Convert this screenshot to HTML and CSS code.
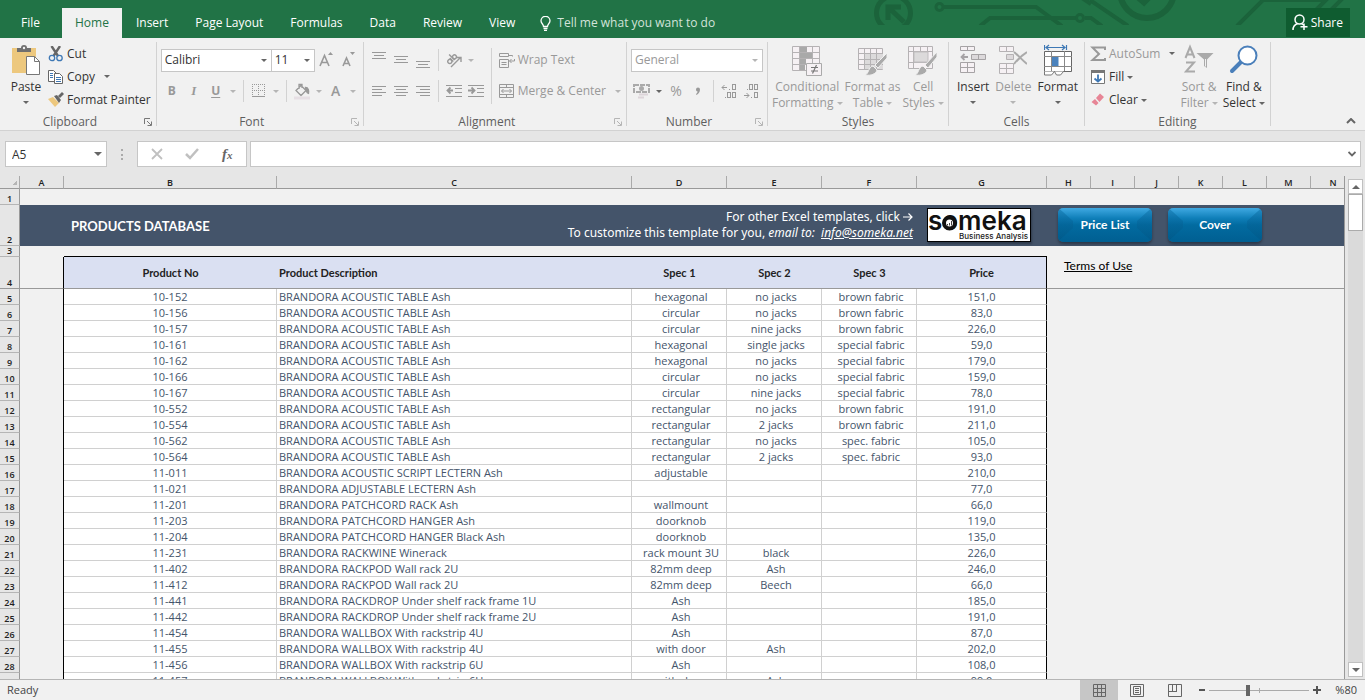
FILE: index.html
```html
<!DOCTYPE html>
<html lang="en">
<head>
<meta charset="utf-8">
<title>Products Database</title>
<link rel="stylesheet" href="styles.css">
</head>
<body>
<header class="titlebar">
  <svg class="circuit" width="495" height="25" viewBox="0 0 495 25" fill="none" stroke="#1b633b" stroke-width="4">
    <circle cx="23.500" cy="13" r="17" stroke-width="5"/>
    <path d="M18 20V7h13M18 7l16 15" stroke-width="5"/>
    <circle cx="69.500" cy="7" r="3.500" stroke-width="3"/>
    <path d="M74 7h92l26 19M110 26l10-8h86M215 18h6l11 8M220 0l38 26"/>
    <circle cx="210" cy="18" r="3.500" stroke-width="3"/>
    <path d="M209-4l12 8"/>
    <circle cx="277" cy="-9" r="27" stroke-width="6"/>
    <path d="M267-3l7 6 14-14" stroke-width="5"/>
    <path d="M367 26l26-26h62M446 10l12-12M461 10l12-12"/>
  </svg>
  <nav class="tabs">
    <button class="tab tab-file">File</button>
    <button class="tab tab-active">Home</button>
    <button class="tab">Insert</button>
    <button class="tab">Page Layout</button>
    <button class="tab">Formulas</button>
    <button class="tab">Data</button>
    <button class="tab">Review</button>
    <button class="tab">View</button>
  </nav>
  <button class="tell">
    <svg width="11" height="15" viewBox="0 0 11 15" fill="none" stroke="#fff" stroke-width="1.300"><path d="M3.500 10.500C3.500 8 1 7.500 1 4.800A4.300 4.300 0 0 1 10 4.800C10 7.500 7.500 8 7.500 10.500zM3.500 12.500h4M4 14.300h3"/></svg>
    <span>Tell me what you want to do</span>
  </button>
  <button class="share">
    <svg width="16" height="17" viewBox="0 0 16 17" fill="none" stroke="#fff" stroke-width="1.500"><circle cx="7.500" cy="5.500" r="4.500"/><path d="M1 16c0-3.500 2-5.500 4.500-6.500M9.500 9.500l2 1.500M12 9.500v6.500M8.500 12.800h7"/></svg>
    <span>Share</span>
  </button>
</header>

<section class="ribbon">
  <div class="group">
    <div class="group-body clip-body">
      <button class="big paste">
        <svg width="30" height="32" viewBox="0 0 30 32"><path d="M1 4h24v25H1z" fill="#edc87e"/><path d="M6 8V4h4a3 3 0 0 1 6 0h4v4z" fill="#6f6f6f"/><circle cx="13" cy="4" r="1.200" fill="#f1f1f1"/><path d="M15.500 12.500h8l5 5v13h-13z" fill="#fff" stroke="#777"/><path d="M23.500 12.500v5h5" fill="none" stroke="#777"/></svg>
        <span>Paste</span><i class="caret"></i>
      </button>
      <div class="stack">
        <button class="row-btn"><svg width="16" height="16" viewBox="0 0 16 16" fill="none"><path d="M3.500 0l6.500 10M12 0L5.500 10" stroke="#666" stroke-width="2.400"/><circle cx="4" cy="12" r="2.700" stroke="#3e78b5" stroke-width="1.300"/><circle cx="11.500" cy="12" r="2.700" stroke="#3e78b5" stroke-width="1.300"/></svg><span>Cut</span></button>
        <button class="row-btn"><svg width="16" height="16" viewBox="0 0 16 16" fill="#fff" stroke="#666"><path d="M.5 1.500h5l3 3v8h-8z"/><path d="M6.500 4.500h5l3 3v7h-8z"/><path d="M2 4.500h3M2 6.500h3M2 8.500h3M8 8.500h5M8 10.500h5M8 12.500h5" stroke="#3e78b5"/></svg><span>Copy</span><i class="caret gap"></i></button>
        <button class="row-btn"><svg width="16" height="16" viewBox="0 0 16 16"><path d="M0 7l5-2 6 6-4 4z" fill="#edc87e"/><path d="M6 4l3-1 4 5-2 3zM10 4l4-4 2 2-4 4z" fill="#666"/></svg><span>Format Painter</span></button>
      </div>
    </div>
    <div class="group-foot"><span>Clipboard</span><button class="launch" aria-label="Clipboard options"><svg width="8" height="8" viewBox="0 0 8 8" fill="none" stroke="currentColor"><path d="M.5 6V.5H6M3 3l4 4M7.500 3.500v4h-4"/></svg></button></div>
  </div>

  <div class="group">
    <div class="group-body rows">
      <div class="line">
        <span class="combo combo-font"><select aria-label="Font"><option>Calibri</option></select><i class="caret"></i></span>
        <span class="combo combo-size"><select aria-label="Font size"><option>11</option></select><i class="caret"></i></span>
        <button class="tool dim" aria-label="Increase font size"><svg width="14" height="16" viewBox="0 0 14 16" fill="none" stroke="currentColor" stroke-width="1.600"><path d="M1 14L5.500 3.500 10 14M2.500 10.500h6"/><path d="M9 3l2.500-3L14 3z" fill="currentColor" stroke="none"/></svg></button>
        <button class="tool dim" aria-label="Decrease font size"><svg width="14" height="16" viewBox="0 0 14 16" fill="none" stroke="currentColor" stroke-width="1.600"><path d="M2 14L5.500 6 9 14M3 11.500h5"/><path d="M9 0l2.500 3L14 0z" fill="currentColor" stroke="none"/></svg></button>
      </div>
      <div class="line">
        <button class="tool dim bold">B</button>
        <button class="tool dim ital">I</button>
        <button class="tool dim under">U</button>
        <button class="drop dim" aria-label="Underline styles"><i class="caret"></i></button>
        <i class="sep"></i>
        <button class="tool dim" aria-label="Borders"><svg width="14" height="14" viewBox="0 0 14 14" fill="none" stroke="currentColor"><path d="M.5 0v12M6.500 0v12M12.500 0v12M0 .5h13M0 6.500h13" stroke-dasharray="1 1"/><path d="M0 12.500h13"/></svg></button>
        <button class="drop dim" aria-label="Border styles"><i class="caret"></i></button>
        <i class="sep"></i>
        <button class="tool dim" aria-label="Fill color"><svg width="16" height="17" viewBox="0 0 16 17" fill="none" stroke="currentColor" stroke-width="1.300"><path d="M2 7.500l5-5 5 5-5 5zM5 6V1.500h3V5"/><path d="M11.500 4.500c3 0 3.500 3 3 6-1.500-.5-2-2-2.500-3z" fill="currentColor"/><path d="M0 15h16" stroke="#e6dfe4" stroke-width="3"/></svg></button>
        <button class="drop dim" aria-label="Fill colors"><i class="caret"></i></button>
        <button class="tool dim fontcolor" aria-label="Font color">A</button>
        <button class="drop dim" aria-label="Font colors"><i class="caret"></i></button>
      </div>
    </div>
    <div class="group-foot"><span>Font</span><button class="launch dim" aria-label="Font options"><svg width="8" height="8" viewBox="0 0 8 8" fill="none" stroke="currentColor"><path d="M.5 6V.5H6M3 3l4 4M7.500 3.500v4h-4"/></svg></button></div>
  </div>

  <div class="group">
    <div class="group-body align-body">
      <div class="rows">
        <div class="line">
          <button class="tool dim" aria-label="Top align"><svg width="14" height="16" viewBox="0 0 14 16" stroke="currentColor"><path d="M0 .5h14M2 3.500h10M0 6.500h14"/></svg></button>
          <button class="tool dim" aria-label="Middle align"><svg width="14" height="16" viewBox="0 0 14 16" stroke="currentColor"><path d="M0 4.500h14M2 7.500h10M0 10.500h14"/></svg></button>
          <button class="tool dim" aria-label="Bottom align"><svg width="14" height="16" viewBox="0 0 14 16" stroke="currentColor"><path d="M0 9.500h14M2 12.500h10M0 15.500h14"/></svg></button>
          <i class="sep"></i>
          <button class="tool dim" aria-label="Orientation"><svg width="16" height="16" viewBox="0 0 16 16" fill="none" stroke="currentColor" stroke-width="1.400"><g transform="rotate(-45 7 7)"><circle cx="3" cy="6.500" r="2"/><path d="M5.500 4v5M7.500 1v8"/><circle cx="9.600" cy="6.500" r="2"/></g><path d="M5 15L14 6M10.500 5.500H15V10"/></svg></button>
          <button class="drop dim" aria-label="Orientation options"><i class="caret"></i></button>
        </div>
        <div class="line">
          <button class="tool dim" aria-label="Align left"><svg width="14" height="12" viewBox="0 0 14 12" stroke="currentColor"><path d="M0 1.500h14M0 4.500h10M0 7.500h14M0 10.500h10"/></svg></button>
          <button class="tool dim" aria-label="Center"><svg width="14" height="12" viewBox="0 0 14 12" stroke="currentColor"><path d="M0 1.500h14M2 4.500h10M0 7.500h14M2 10.500h10"/></svg></button>
          <button class="tool dim" aria-label="Align right"><svg width="14" height="12" viewBox="0 0 14 12" stroke="currentColor"><path d="M0 1.500h14M4 4.500h10M0 7.500h14M4 10.500h10"/></svg></button>
          <i class="sep"></i>
          <button class="tool dim" aria-label="Decrease indent"><svg width="16" height="14" viewBox="0 0 16 14" fill="none" stroke="currentColor"><path d="M0 1.500h16M9 4.500h7M9 8.500h7M0 12.500h16"/><path d="M7 6.500H2M4.500 3.500l-3 3 3 3" stroke-width="1.800"/></svg></button>
          <button class="tool dim" aria-label="Increase indent"><svg width="16" height="14" viewBox="0 0 16 14" fill="none" stroke="currentColor"><path d="M0 1.500h16M9 4.500h7M9 8.500h7M0 12.500h16"/><path d="M0 6.500h6M3.500 3.500l3 3-3 3" stroke-width="1.800"/></svg></button>
        </div>
      </div>
      <i class="sep tall"></i>
      <div class="rows wraps">
        <button class="row-btn dim"><svg width="16" height="16" viewBox="0 0 16 16" fill="none" stroke="currentColor"><path d="M.5 1.500h9v3h-9zM.5 7.500h9v8h-9zM2.500 10.500h5M2.500 12.500h5M9.500 3.500h4v1M15.500 7v2h-5M12.500 7l-2 2 2 2"/></svg><span>Wrap Text</span></button>
        <button class="row-btn dim"><svg width="16" height="16" viewBox="0 0 16 16" fill="none" stroke="currentColor"><path d="M.5 1.500h14v13H.500zM.5 4.500h14M.5 11.500h14M7.500 1v3.500M7.500 11.500V15M2.500 8h10M4.500 6l-2 2 2 2M10.500 6l2 2-2 2"/></svg><span>Merge &amp; Center</span><i class="caret gap"></i></button>
      </div>
    </div>
    <div class="group-foot"><span>Alignment</span><button class="launch dim" aria-label="Alignment options"><svg width="8" height="8" viewBox="0 0 8 8" fill="none" stroke="currentColor"><path d="M.5 6V.5H6M3 3l4 4M7.500 3.500v4h-4"/></svg></button></div>
  </div>

  <div class="group">
    <div class="group-body rows">
      <div class="line"><span class="combo combo-num dim"><select aria-label="Number format"><option>General</option></select><i class="caret"></i></span></div>
      <div class="line">
        <button class="tool dim" aria-label="Accounting format"><svg width="17" height="17" viewBox="0 0 17 17" fill="none" stroke="#aaa"><path d="M1 2h15v7H1z" stroke-width="2" stroke-dasharray="5 1"/><circle cx="8.500" cy="5.500" r="2.500" fill="#aaa" stroke="none"/><path d="M6 11.500h9M5 14.500h6" stroke="#ddd5da" stroke-width="2"/></svg></button>
        <button class="drop" aria-label="Accounting formats"><i class="caret"></i></button>
        <button class="tool dim pct">%</button>
        <button class="tool dim" aria-label="Comma style"><svg width="6" height="8" viewBox="0 0 6 8"><path d="M1 2.500a2 2 0 1 1 4 0C5 5 3.500 7 1.500 8l-.5-1c1-.7 1.500-1.300 1.600-2.400A2 2 0 0 1 1 2.500z" fill="currentColor"/></svg></button>
        <i class="sep"></i>
        <button class="tool dim" aria-label="Increase decimal"><svg width="16" height="15" viewBox="0 0 16 15" fill="none" stroke="currentColor"><path d="M6 3.500H1M3.500 1L1 3.500 3.500 6M8 5.500h1M4 13.500h1"/><rect x="11.500" y=".5" width="3" height="5"/><rect x="6.500" y="8.500" width="3" height="5"/><rect x="11.500" y="8.500" width="3" height="5"/></svg></button>
        <button class="tool dim" aria-label="Decrease decimal"><svg width="16" height="15" viewBox="0 0 16 15" fill="none" stroke="currentColor"><path d="M1 11.500h5M3.500 9L6 11.500 3.500 14M8 13.500h1M4 5.500h1"/><rect x="11.500" y="8.500" width="3" height="5"/><rect x="6.500" y=".5" width="3" height="5"/><rect x="11.500" y=".5" width="3" height="5"/></svg></button>
      </div>
    </div>
    <div class="group-foot"><span>Number</span><button class="launch dim" aria-label="Number options"><svg width="8" height="8" viewBox="0 0 8 8" fill="none" stroke="currentColor"><path d="M.5 6V.5H6M3 3l4 4M7.500 3.500v4h-4"/></svg></button></div>
  </div>

  <div class="group">
    <div class="group-body bigs">
      <button class="big dim">
        <svg width="30" height="32" viewBox="0 0 30 32" fill="#f6f1f4" stroke="#b5b2b4"><path d="M.5 2.500h27v24H.500z"/><path d="M8 3h7v6H8zM8 9h12v6H8zM8 15h6v6H8zM8 21h5v5H8z" fill="#a9a9a9" stroke="none"/><path d="M7.500 2v24M20.500 2v24M0 8.500h28M0 14.500h28M0 20.500h28"/><path d="M14.500 19.500h15v12h-15z" stroke="#aaa"/><path d="M19 23.500h7M19 27h7M24.500 21l-4 8.500" stroke="#777" stroke-width="1.200"/></svg>
        <span>Conditional</span><span>Formatting <i class="caret"></i></span>
      </button>
      <button class="big dim">
        <svg width="30" height="32" viewBox="0 0 30 32" fill="#f6f1f4" stroke="#b5b2b4"><path d="M.5 4.500h24v21H.500z"/><path d="M7 10h18v15H7z" fill="#dcdadb" stroke="none"/><path d="M6.500 4v21M12.500 4v21M18.500 4v21M0 9.500h25M0 15.500h25M0 20.500h25"/><path d="M29 9v5l-9 10-3-3z" fill="#aaa" stroke="#f1f1f1"/><path d="M7 31c4-1 3-8 8-9l4 4c-1 4-6 6-12 5z" fill="#aaa" stroke="#f1f1f1"/></svg>
        <span>Format as</span><span>Table <i class="caret"></i></span>
      </button>
      <button class="big dim">
        <svg width="30" height="32" viewBox="0 0 30 32" fill="#f6f1f4" stroke="#b5b2b4"><path d="M.5 2.500h24v22H.500z"/><path d="M5.500 2v22M19.500 2v22M0 7.500h25M0 18.500h25M12.500 2v5"/><path d="M6 8h14v10H6z" fill="#dcdadb" stroke="#c0bdbf"/><path d="M29 8v5l-9 11-3-3z" fill="#aaa" stroke="#f1f1f1"/><path d="M7 31c4-1 3-8 8-9l4 4c-1 4-6 6-12 5z" fill="#aaa" stroke="#f1f1f1"/></svg>
        <span>Cell</span><span>Styles <i class="caret"></i></span>
      </button>
    </div>
    <div class="group-foot"><span>Styles</span></div>
  </div>

  <div class="group">
    <div class="group-body bigs cells">
      <button class="big">
        <svg width="28" height="32" viewBox="0 0 28 32" fill="#f6f1f4" stroke="#a6a3a5"><path d="M1.500 2.500h14v4h-14zM8.500 2v4M1.500 18.500h14v10h-14zM8.500 18v10M1 23.500h14"/><path d="M12.500 10.500h14v5h-14z" fill="#dcd9db"/><path d="M19.500 10v5"/><path d="M9 13H3M5.500 10L2.500 13l3 3" fill="none" stroke-width="1.800"/></svg>
        <span>Insert</span><i class="caret"></i>
      </button>
      <button class="big dim">
        <svg width="28" height="32" viewBox="0 0 28 32" fill="#f6f1f4" stroke="#b5b2b4"><path d="M.5 2.500h14v5H.500zM7.500 2v5M.5 19.500h14v10H.500zM7.500 19v10M0 24.500h14"/><path d="M7.500 10.500h7v5h-7z" fill="#dcd9db"/><path d="M15 8c4 3 8 8 13 12M28 8c-5 3-9 7-13 12" fill="none" stroke="#aaa" stroke-width="2"/></svg>
        <span>Delete</span><i class="caret"></i>
      </button>
      <button class="big">
        <svg width="28" height="32" viewBox="0 0 28 32" fill="#fff" stroke="#888"><path d="M.5 7.500h27v20H.500z" stroke="#666"/><path d="M7.500 7v20M20.500 7v20M0 12.500h28M0 22.500h28"/><path d="M8 13h6.500v9H8z" fill="#4a82bd" stroke="none"/><path d="M.5 27.500v3.500h7l3-3.500 2 3.500h4l3-3.500" stroke="#777"/><path d="M.5 1v5M22.500 1v5M2 3.500h19M5 1L2 3.500 5 6M18 1l3 2.500L18 6" fill="none" stroke="#3e78b5" stroke-width="1.200"/></svg>
        <span>Format</span><i class="caret"></i>
      </button>
    </div>
    <div class="group-foot"><span>Cells</span></div>
  </div>

  <div class="group">
    <div class="group-body edit-body">
      <div class="stack">
        <button class="row-btn dim wide"><svg width="16" height="16" viewBox="0 0 16 16" fill="none" stroke="#999" stroke-width="2"><path d="M15 4V1.500H2.500L9 8l-6.500 6H15V12"/></svg><span>AutoSum</span><i class="caret gap dark"></i></button>
        <button class="row-btn"><svg width="16" height="16" viewBox="0 0 16 16" fill="none"><path d="M1.500 1.500h13v13h-13z" fill="#fff" stroke="#777"/><path d="M1 1h14v3H1z" fill="#777"/><path d="M8 5.500v7M4.500 9.500L8 12.500l3.500-3" stroke="#3e78b5" stroke-width="1.800"/></svg><span>Fill <i class="caret"></i></span></button>
        <button class="row-btn"><svg width="16" height="16" viewBox="0 0 16 16"><path d="M6 6l4-4.500L14 5 9.500 10zM5 7l3.500 4L6 13.500 1.500 10z" fill="#e78596"/></svg><span>Clear <i class="caret"></i></span></button>
      </div>
      <button class="big dim">
        <svg width="30" height="32" viewBox="0 0 30 32" fill="none" stroke="#aaa" stroke-width="2"><path d="M1.500 14L6 3l4.500 11M3 10.500h6M2 18.500h8l-8 9h9"/><path d="M12.500 9h17l-6.500 6.500V24l-3-2v-6.500z" fill="#aaa" stroke="none"/><path d="M21.500 15v7.500" stroke="#f1f1f1" stroke-width="1"/></svg>
        <span>Sort &amp;</span><span>Filter <i class="caret"></i></span>
      </button>
      <button class="big">
        <svg width="30" height="32" viewBox="0 0 30 32"><path d="M3 27l9-9" stroke="#4a7fba" stroke-width="4" stroke-linecap="round"/><circle cx="18.500" cy="11.500" r="9" fill="#fff" stroke="#4a7fba" stroke-width="2"/></svg>
        <span>Find &amp;</span><span>Select <i class="caret"></i></span>
      </button>
    </div>
    <div class="group-foot"><span>Editing</span></div>
  </div>
  <button class="collapse" aria-label="Collapse the ribbon"><svg width="10" height="6" viewBox="0 0 10 6" fill="none" stroke="#666" stroke-width="2"><path d="M1 5l4-4 4 4"/></svg></button>
</section>

<section class="formula">
  <span class="combo namebox"><input aria-label="Name box" value="A5"><i class="caret large"></i></span>
  <i class="dots"></i>
  <div class="fx">
    <button aria-label="Cancel"><svg width="12" height="12" viewBox="0 0 12 12" stroke="#c0c0c0" stroke-width="1.800"><path d="M1 1l10 10M11 1L1 11"/></svg></button>
    <button aria-label="Enter"><svg width="14" height="12" viewBox="0 0 14 12" fill="none" stroke="#c0c0c0" stroke-width="2.500"><path d="M1 6l4 4 8-9"/></svg></button>
    <button class="fn" aria-label="Insert function">f<small>x</small></button>
  </div>
  <span class="combo entry"><input aria-label="Formula bar"><svg class="chev" width="8" height="6" viewBox="0 0 8 6" fill="none" stroke="#666" stroke-width="1.800"><path d="M.5 1L4 4.500 7.500 1"/></svg></span>
</section>

<main class="sheet">
  <div class="grid-wrap">
  <table class="grid">
    <colgroup><col class="c-num"><col class="c-s"><col class="c-b"><col class="c-c"><col class="c-d"><col class="c-d"><col class="c-d"><col class="c-g"><col class="c-s"><col class="c-s"><col class="c-s"><col class="c-s"><col class="c-s"><col class="c-s"><col></colgroup>
    <thead>
      <tr class="letters"><th class="corner"></th><th>A</th><th>B</th><th>C</th><th>D</th><th>E</th><th>F</th><th>G</th><th>H</th><th>I</th><th>J</th><th>K</th><th>L</th><th>M</th><th class="last">N</th></tr>
      <tr class="r1"><th>1</th><td colspan="14"></td></tr>
      <tr class="r2"><th>2</th><td></td><td class="title">PRODUCTS DATABASE</td>
        <td class="promo" colspan="4">For other Excel templates, click <svg class="arrow" width="10" height="8" viewBox="0 0 10 8" fill="none" stroke="#fff" stroke-width="1.200"><path d="M0 4h9M5.500.5L9 4 5.500 7.500"/></svg><br>To customize this template for you, <em>email to:&nbsp; <a href="#">info@someka.net</a></em></td>
        <td class="logo-cell"><svg class="logo" width="104" height="34" viewBox="0 0 104 34"><rect x=".5" y=".5" width="103" height="33" fill="#fff" stroke="#000"/><text class="logo-name" x="1" y="22">someka</text><circle cx="22.500" cy="15" r="5.500" fill="#fff" stroke="#111" stroke-width="4"/><path d="M20.500 17.500V16M22.500 17.500V15M24.500 17.500V13" stroke="#444"/><text class="logo-sub" x="101" y="31" text-anchor="end">Business Analysis</text></svg></td>
        <td class="nav-cell" colspan="7"><div class="navs"><button class="nav">Price List</button><button class="nav">Cover</button></div></td></tr>
      <tr class="r3"><th>3</th><td></td><td class="topline" colspan="6"></td><td colspan="7"></td></tr>
      <tr class="r4"><th>4</th><td class="a"></td><td class="h">Product No</td><td class="h left">Product Description</td><td class="h">Spec 1</td><td class="h">Spec 2</td><td class="h">Spec 3</td><td class="h g">Price</td><td class="terms" colspan="7"><a href="#">Terms of Use</a></td></tr>
    </thead>
    <tbody>
      <tr><th>5</th><td></td><td>10-152</td><td>BRANDORA ACOUSTIC TABLE Ash</td><td>hexagonal</td><td>no jacks</td><td>brown fabric</td><td>151,0</td><td colspan="7"></td></tr>
      <tr><th>6</th><td></td><td>10-156</td><td>BRANDORA ACOUSTIC TABLE Ash</td><td>circular</td><td>no jacks</td><td>brown fabric</td><td>83,0</td><td colspan="7"></td></tr>
      <tr><th>7</th><td></td><td>10-157</td><td>BRANDORA ACOUSTIC TABLE Ash</td><td>circular</td><td>nine jacks</td><td>brown fabric</td><td>226,0</td><td colspan="7"></td></tr>
      <tr><th>8</th><td></td><td>10-161</td><td>BRANDORA ACOUSTIC TABLE Ash</td><td>hexagonal</td><td>single jacks</td><td>special fabric</td><td>59,0</td><td colspan="7"></td></tr>
      <tr><th>9</th><td></td><td>10-162</td><td>BRANDORA ACOUSTIC TABLE Ash</td><td>hexagonal</td><td>no jacks</td><td>special fabric</td><td>179,0</td><td colspan="7"></td></tr>
      <tr><th>10</th><td></td><td>10-166</td><td>BRANDORA ACOUSTIC TABLE Ash</td><td>circular</td><td>no jacks</td><td>special fabric</td><td>159,0</td><td colspan="7"></td></tr>
      <tr><th>11</th><td></td><td>10-167</td><td>BRANDORA ACOUSTIC TABLE Ash</td><td>circular</td><td>nine jacks</td><td>special fabric</td><td>78,0</td><td colspan="7"></td></tr>
      <tr><th>12</th><td></td><td>10-552</td><td>BRANDORA ACOUSTIC TABLE Ash</td><td>rectangular</td><td>no jacks</td><td>brown fabric</td><td>191,0</td><td colspan="7"></td></tr>
      <tr><th>13</th><td></td><td>10-554</td><td>BRANDORA ACOUSTIC TABLE Ash</td><td>rectangular</td><td>2 jacks</td><td>brown fabric</td><td>211,0</td><td colspan="7"></td></tr>
      <tr><th>14</th><td></td><td>10-562</td><td>BRANDORA ACOUSTIC TABLE Ash</td><td>rectangular</td><td>no jacks</td><td>spec. fabric</td><td>105,0</td><td colspan="7"></td></tr>
      <tr><th>15</th><td></td><td>10-564</td><td>BRANDORA ACOUSTIC TABLE Ash</td><td>rectangular</td><td>2 jacks</td><td>spec. fabric</td><td>93,0</td><td colspan="7"></td></tr>
      <tr><th>16</th><td></td><td>11-011</td><td>BRANDORA ACOUSTIC SCRIPT LECTERN Ash</td><td>adjustable</td><td></td><td></td><td>210,0</td><td colspan="7"></td></tr>
      <tr><th>17</th><td></td><td>11-021</td><td>BRANDORA ADJUSTABLE LECTERN Ash</td><td></td><td></td><td></td><td>77,0</td><td colspan="7"></td></tr>
      <tr><th>18</th><td></td><td>11-201</td><td>BRANDORA PATCHCORD RACK Ash</td><td>wallmount</td><td></td><td></td><td>66,0</td><td colspan="7"></td></tr>
      <tr><th>19</th><td></td><td>11-203</td><td>BRANDORA PATCHCORD HANGER Ash</td><td>doorknob</td><td></td><td></td><td>119,0</td><td colspan="7"></td></tr>
      <tr><th>20</th><td></td><td>11-204</td><td>BRANDORA PATCHCORD HANGER Black Ash</td><td>doorknob</td><td></td><td></td><td>135,0</td><td colspan="7"></td></tr>
      <tr><th>21</th><td></td><td>11-231</td><td>BRANDORA RACKWINE Winerack</td><td>rack mount 3U</td><td>black</td><td></td><td>226,0</td><td colspan="7"></td></tr>
      <tr><th>22</th><td></td><td>11-402</td><td>BRANDORA RACKPOD Wall rack 2U</td><td>82mm deep</td><td>Ash</td><td></td><td>246,0</td><td colspan="7"></td></tr>
      <tr><th>23</th><td></td><td>11-412</td><td>BRANDORA RACKPOD Wall rack 2U</td><td>82mm deep</td><td>Beech</td><td></td><td>66,0</td><td colspan="7"></td></tr>
      <tr><th>24</th><td></td><td>11-441</td><td>BRANDORA RACKDROP Under shelf rack frame 1U</td><td>Ash</td><td></td><td></td><td>185,0</td><td colspan="7"></td></tr>
      <tr><th>25</th><td></td><td>11-442</td><td>BRANDORA RACKDROP Under shelf rack frame 2U</td><td>Ash</td><td></td><td></td><td>191,0</td><td colspan="7"></td></tr>
      <tr><th>26</th><td></td><td>11-454</td><td>BRANDORA WALLBOX With rackstrip 4U</td><td>Ash</td><td></td><td></td><td>87,0</td><td colspan="7"></td></tr>
      <tr><th>27</th><td></td><td>11-455</td><td>BRANDORA WALLBOX With rackstrip 4U</td><td>with door</td><td>Ash</td><td></td><td>202,0</td><td colspan="7"></td></tr>
      <tr><th>28</th><td></td><td>11-456</td><td>BRANDORA WALLBOX With rackstrip 6U</td><td>Ash</td><td></td><td></td><td>108,0</td><td colspan="7"></td></tr>
      <tr><th></th><td></td><td>11-457</td><td>BRANDORA WALLBOX With rackstrip 6U</td><td>with door</td><td>Ash</td><td></td><td>99,0</td><td colspan="7"></td></tr>
    </tbody>
  </table>
  </div>
  <div class="scroll">
    <button aria-label="Scroll up"><i class="caret large up"></i></button>
    <div class="track"><div class="thumb"></div></div>
    <button aria-label="Scroll down"><i class="caret large"></i></button>
  </div>
</main>

<footer class="status">
  <span class="ready">Ready</span>
  <button class="view on" aria-label="Normal view"><svg width="13" height="13" viewBox="0 0 13 13" fill="none" stroke="#666"><path d="M.5.5h12v12H.500zM4.500 0v13M8.500 0v13M0 4.500h13M0 8.500h13"/></svg></button>
  <button class="view" aria-label="Page layout view"><svg width="14" height="13" viewBox="0 0 14 13" fill="none" stroke="#666"><path d="M.5.5h13v12H.500zM3.500 2.500h7v8h-7zM5 4.500h4M5 6.500h4M5 8.500h4"/></svg></button>
  <button class="view" aria-label="Page break view"><svg width="14" height="13" viewBox="0 0 14 13" fill="none" stroke="#666"><path d="M.5.5h13v12H.500zM4.500 0v7M8.500 0v7M0 7.500h9"/></svg></button>
  <button class="zoom-btn" aria-label="Zoom out"><svg width="6" height="10" viewBox="0 0 6 10"><path d="M0 5h6" stroke="#555" stroke-width="2"/></svg></button>
  <input class="slider" type="range" min="0" max="100" value="39" aria-label="Zoom">
  <button class="zoom-btn" aria-label="Zoom in"><svg width="8" height="8" viewBox="0 0 8 8"><path d="M0 4h8M4 0v8" stroke="#555" stroke-width="2"/></svg></button>
  <span class="pct80">%80</span>
</footer>
</body>
</html>
```
FILE: styles.css
```css
* { box-sizing: border-box; }
body {
  margin: 0;
  height: 100vh;
  display: flex;
  flex-direction: column;
  overflow: hidden;
  background: #e6e6e6;
  color: #333;
  font: 12px/16px "Open Sans", "Noto Sans", sans-serif;
}
button, input, select { font: inherit; color: inherit; }
button { border: 0; background: none; padding: 0; margin: 0; white-space: nowrap; }
svg { display: block; flex: none; }

.caret {
  display: inline-block;
  flex: none;
  border: 3px solid transparent;
  border-top-color: #666;
  border-bottom: 0;
  vertical-align: middle;
}
.caret.large { border-width: 4px 4px 0; }
.caret.up { border-width: 0 4px 4px; border-bottom: 4px solid #666; }
.dim { color: #999; }
.dim .caret { border-top-color: #b5b5b5; }
.dim .caret.dark { border-top-color: #666; }
.caret.gap { margin-left: 6px; }

/* Title bar */
.titlebar {
  position: relative;
  display: flex;
  flex: none;
  align-items: flex-end;
  height: 38px;
  background: #217346;
  color: #fff;
}
.circuit { position: absolute; right: 0; top: 0; }
.tabs { display: flex; gap: 1px; }
.tab { height: 30px; padding: 0 13px; }
.tab-file { width: 61px; }
.tab-active { background: #f1f1f1; color: #217346; }
.tell { display: flex; align-items: center; gap: 6px; height: 30px; margin-left: 12px; color: #d3e3da; }
.share {
  position: relative;
  display: flex;
  align-items: center;
  gap: 3px;
  height: 29px;
  margin: 0 15px 1px auto;
  padding: 0 7px 0 6px;
  background: #0f5c30;
}

/* Ribbon */
.ribbon {
  display: flex;
  flex: none;
  padding: 4px 0;
  background: #f1f1f1;
  border-bottom: 1px solid #d2d2d2;
}
.group { display: flex; flex-direction: column; border-right: 1px solid #d2d2d2; }
.group-body { display: flex; flex: none; height: 72px; }
.group-foot { display: flex; align-items: center; height: 16px; margin-bottom: -4px; color: #5e5e5e; }
.group-foot span { flex: 1; text-align: center; }
.launch { width: 16px; height: 16px; display: grid; place-items: center; color: #777; }
.launch.dim { color: #b5b5b5; }
.rows, .group-body.rows { display: flex; flex-direction: column; gap: 9px; padding: 7px 4px 0; }
.line { display: flex; align-items: center; height: 22px; }
.tool { width: 22px; height: 22px; display: grid; place-items: center; }
.drop { width: 12px; height: 22px; display: grid; place-items: center; }
.sep { flex: none; width: 1px; height: 22px; margin: 0 4px; background: #d2d2d2; }
.sep.tall { height: 56px; margin: 6px 0 0; }
.bold { font-weight: 700; }
.ital { font: italic 700 13px "Liberation Serif", serif; }
.under { font-weight: 700; text-decoration: underline; text-underline-offset: 2px; }
.fontcolor { font-weight: 600; font-size: 14px; }
.pct { font-size: 14px; }

.combo { position: relative; display: flex; align-items: center; background: #fff; border: 1px solid #c6c6c6; }
.combo select, .combo input {
  appearance: none;
  width: 100%;
  height: 100%;
  border: 0;
  outline: 0;
  margin: 0;
  padding: 0 3px;
  background: none;
}
.combo .caret { position: absolute; right: 4px; }
.combo-font { width: 111px; height: 23px; }
.combo-size { width: 43px; height: 23px; border-left: 0; }
.combo-num { width: 132px; height: 23px; }

.big { display: flex; flex-direction: column; align-items: center; height: 72px; padding-top: 2px; }
.big > svg { margin-bottom: 3px; }
.big > .caret { margin-top: 6px; }
.big .caret { vertical-align: 2px; }
.clip-body { gap: 7px; padding: 0 5px 0 11px; }
.clip-body .paste { width: 30px; }
.stack { display: flex; flex-direction: column; }
.row-btn { display: flex; align-items: center; gap: 3px; height: 22px; }
.stack .row-btn { height: 23px; }
.align-body .rows { padding-right: 4px; }
.align-body .wraps { padding: 7px 5px 0 7px; }
.bigs { gap: 2px; padding: 0 4px; }
.cells { gap: 6px; padding: 0 6px 0 8px; }
.edit-body { gap: 5px; padding: 0 5px; }
.collapse { margin-left: auto; align-self: flex-end; padding: 0 9px 2px; }

/* Formula bar */
.formula { display: flex; flex: none; height: 45px; padding: 10px 4px 9px 5px; }
.namebox { width: 102px; }
.namebox input { padding: 0 6px; }
.dots { width: 3px; height: 11px; margin: 8px 13px 0 14px; border-left: 2px dotted #aaa; }
.fx { display: flex; width: 110px; padding: 0 1px; background: #fff; border: 1px solid #c6c6c6; }
.fx button { flex: 1; display: grid; place-items: center; }
.fx .fn { display: block; font: italic 700 15px/20px "Liberation Serif", serif; color: #666; }
.fn small { font-size: 11px; }
.entry { flex: 1; margin-left: 3px; }
.chev { position: absolute; right: 4px; }

/* Worksheet */
.sheet { display: flex; flex: 1; min-height: 0; }
.grid-wrap { flex: 1; overflow: hidden; background: #f1f1f1; border-right: 1px solid #999; }
.grid { width: 100%; table-layout: fixed; border-collapse: separate; border-spacing: 0; font-size: 11px; line-height: 15px; color: #44546a; }
.grid th, .grid td { padding: 0; height: 16px; overflow: hidden; white-space: nowrap; }
.grid th {
  vertical-align: bottom;
  background: #e6e6e6;
  border-right: 1px solid #999;
  border-bottom: 1px solid #b5b5b5;
  color: #222;
  font-size: 9px;
  font-weight: 600;
  line-height: 11px;
}
.grid .letters th { height: 13px; border-bottom-color: #999; border-right-color: #aaa; }
.grid .letters .last { border-right: 0; padding-left: 11px; }
.grid .corner { background: linear-gradient(135deg, #e6e6e6 60%, #b5b5b5 60%) 12px 4px / 5px 5px no-repeat #e6e6e6; }
.c-num { width: 20px; }
.c-s { width: 44px; }
.c-b { width: 213px; }
.c-c { width: 355px; }
.c-d { width: 95px; }
.c-g { width: 130px; }
.grid .r2 th, .grid .r2 td { height: 41px; }
.grid .r2 td { background: #44546a; color: #fff; }
.grid .r3 th, .grid .r3 td { height: 11px; line-height: 10px; }
.grid .r4 th, .grid .r4 td { height: 32px; border-bottom: 1px solid #999; }
.grid .topline { border-bottom: 1px solid #000; }
.grid .title { padding-left: 7px; font: 700 13px/16px Lato, sans-serif; }
.grid .promo { padding: 0 4px 2px 0; text-align: right; font: 12px/16px "Noto Sans", sans-serif; }
.promo a { color: #fff; }
.arrow { display: inline-block; }
.grid .logo-cell { padding: 0 0 2px 10px; }
.logo { box-shadow: 1px 2px 2px #2f3b4c; }
.logo-name { font: 600 26px Inter, sans-serif; fill: #111; }
.logo-sub { font: 500 8px Inter, sans-serif; fill: #222; }
.grid .nav-cell { padding: 0 0 2px 11px; }
.navs { display: flex; gap: 16px; }
.nav {
  position: relative;
  width: 94px;
  height: 34px;
  border-radius: 5px;
  overflow: hidden;
  background: linear-gradient(#3fa9e2, #0f7fb9 30%, #026ba0 50%, #005f92);
  box-shadow: 0 2px 3px #2c3747;
  color: #fff;
  font: 700 12px Lato, sans-serif;
}
.nav::before {
  content: "";
  position: absolute;
  inset: 0;
  background: linear-gradient(#0a6ea5, #005482);
  opacity: .5;
  clip-path: polygon(0 0, 16% 40%, 16% 60%, 0 100%, 100% 100%, 84% 60%, 84% 40%, 100% 0, 100% 100%, 0 100%);
}
.grid .r4 .h { background: #dae0f2; color: #222; text-align: center; font: 700 11px Lato, sans-serif; }
.grid .r4 .a { border-right: 1px solid #000; }
.grid .r4 .left { text-align: left; padding-left: 2px; }
.grid .r4 .g { border-right: 1px solid #000; }
.grid .terms { padding: 1px 0 0 17px; vertical-align: top; font: 12px/16px Lato, sans-serif; }
.terms a { color: #000; }
.grid tbody td { text-align: center; background: #fff; border-right: 1px solid #d0d0d0; border-bottom: 1px solid #d0d0d0; }
.grid tbody td:nth-child(2) { background: #f1f1f1; border-bottom: 0; border-right-color: #000; }
.grid tbody td:nth-child(4) { text-align: left; padding-left: 2px; }
.grid tbody td:nth-child(5), .grid tbody td:nth-child(6), .grid tbody td:nth-child(7) { padding-left: 4px; }
.grid tbody td:nth-child(8) { border-right-color: #000; }
.grid tbody td:nth-child(9) { background: #f1f1f1; border: 0; }

.scroll { display: flex; flex-direction: column; width: 20px; padding: 3px 2px 2px 3px; }
.scroll button { height: 15px; display: grid; place-items: center; background: #fff; border: 1px solid #c0c0c0; }
.track { flex: 1; background: #dadada; }
.thumb { height: 37px; background: #fff; border: 1px solid #ababab; }

/* Status bar */
.status { display: flex; flex: none; align-items: center; height: 21px; background: #f1f1f1; border-top: 1px solid #b5b5b5; color: #444; font-size: 11px; }
.ready { margin: 0 auto 0 7px; }
.view { width: 38px; height: 20px; display: grid; place-items: center; }
.view.on { background: #c6c6c6; }
.zoom-btn { width: 15px; height: 20px; display: grid; place-items: center; }
.slider {
  appearance: none;
  width: 100px;
  height: 11px;
  margin: 0;
  background: linear-gradient(#aaa, #aaa) 50px 3px / 1px 5px no-repeat, linear-gradient(#aaa, #aaa) 0 5px / 100% 1px no-repeat;
}
.slider::-webkit-slider-thumb { appearance: none; width: 4px; height: 11px; background: #666; }
.pct80 { width: 41px; padding-right: 8px; text-align: right; }
```
